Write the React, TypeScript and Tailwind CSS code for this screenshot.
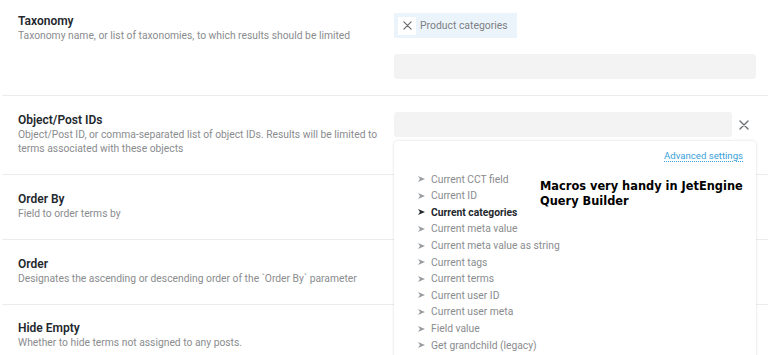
import React from "react";

const macros = [
  "Current CCT field",
  "Current ID",
  "Current categories",
  "Current meta value",
  "Current meta value as string",
  "Current tags",
  "Current terms",
  "Current user ID",
  "Current user meta",
  "Field value",
  "Get grandchild (legacy)",
];

function Arrow({ dark }: { dark?: boolean }) {
  return (
    <svg width="7" height="6" viewBox="0 0 7 6" className="shrink-0">
      <path d="M0 0 L7 3 L0 6 L2 3 Z" fill={dark ? "#23282d" : "#9a9da0"} />
    </svg>
  );
}

function XIcon({ size = 10, color = "#6b6e71" }: { size?: number; color?: string }) {
  return (
    <svg width={size} height={size} viewBox="0 0 10 10">
      <path d="M1 1 L9 9 M9 1 L1 9" stroke={color} strokeWidth="1.4" strokeLinecap="round" />
    </svg>
  );
}

function Label({ title, desc }: { title: string; desc: React.ReactNode }) {
  return (
    <div className="w-[392px] shrink-0 pl-[16px] pr-2">
      <div className="text-[12px] leading-[14px] font-semibold text-[#23282d]">{title}</div>
      <div className="text-[10.3px] leading-[14px] text-[#8a8c8e] mt-[1px]">{desc}</div>
    </div>
  );
}

export default function App() {
  return (
    <div className="w-[768px] h-[355px] overflow-hidden bg-white font-['Roboto',sans-serif]">
      {/* Taxonomy */}
      <div className="flex pt-[13px] pb-[16px]">
        <div className="ml-[2px] pt-[1px]">
          <Label title="Taxonomy" desc="Taxonomy name, or list of taxonomies, to which results should be limited" />
        </div>
        <div className="flex-1 pr-[12px]">
          <div className="inline-flex items-center h-[25px] bg-[#ebf4fb] pl-[4px] pr-[9px] gap-[4px]">
            <div className="w-[18px] h-[18px] bg-white flex items-center justify-center">
              <XIcon size={9} />
            </div>
            <span className="text-[10.4px] text-[#7d8083]">Product categories</span>
          </div>
          <div className="mt-[16px] h-[25px] rounded-[3px] bg-[#f3f3f3]" />
        </div>
      </div>

      {/* Object/Post IDs */}
      <div className="flex border-t border-[#ececec] ml-[2px] pt-[16px] pb-[18px]">
        <div className="pt-[1px]">
          <Label
            title="Object/Post IDs"
            desc={
              <>
                Object/Post ID, or comma-separated list of object IDs. Results will be limited to
                <br />
                terms associated with these objects
              </>
            }
          />
        </div>
        <div className="flex-1 pr-[12px] relative">
          <div className="flex items-center">
            <div className="flex-1 h-[25px] rounded-[3px] bg-[#f3f3f3]" />
            <div className="w-[24px] flex justify-center">
              <XIcon size={10} color="#6e7174" />
            </div>
          </div>
          <div className="absolute left-0 right-[12px] top-[29px] h-[240px] z-10 bg-white rounded-[4px] shadow-[0_0_3px_rgba(0,0,0,0.15)]">
            <div className="flex justify-end pr-[13px] pt-[8px]">
              <span className="text-[9.6px] leading-[14px] text-[#3aa1d8] underline decoration-dotted underline-offset-2">
                Advanced settings
              </span>
            </div>
            <div className="pl-[24px] pt-[8px]">
              {macros.map((m) => {
                const active = m === "Current categories";
                return (
                  <div key={m} className="flex items-center gap-[6px] h-[16.6px]">
                    <Arrow dark={active} />
                    <span
                      className={`text-[10.3px] ${active ? "font-bold text-[#23282d]" : "text-[#8a8c8e]"}`}
                    >
                      {m}
                    </span>
                  </div>
                );
              })}
            </div>
            <div className="absolute left-[146px] top-[38px] text-[11.4px] leading-[15px] font-bold text-black font-['DejaVu_Sans',sans-serif]">
              Macros very handy in JetEngine
              <br />
              Query Builder
            </div>
          </div>
        </div>
      </div>

      {/* Order By */}
      <div className="flex border-t border-[#ececec] ml-[2px] pt-[17px] pb-[18px]">
        <Label title="Order By" desc="Field to order terms by" />
      </div>

      {/* Order */}
      <div className="flex border-t border-[#ececec] ml-[2px] pt-[17px] pb-[18px]">
        <Label title="Order" desc="Designates the ascending or descending order of the `Order By` parameter" />
      </div>

      {/* Hide Empty */}
      <div className="flex border-t border-[#ececec] ml-[2px] pt-[16px] pb-[19px]">
        <Label title="Hide Empty" desc="Whether to hide terms not assigned to any posts." />
      </div>
    </div>
  );
}
